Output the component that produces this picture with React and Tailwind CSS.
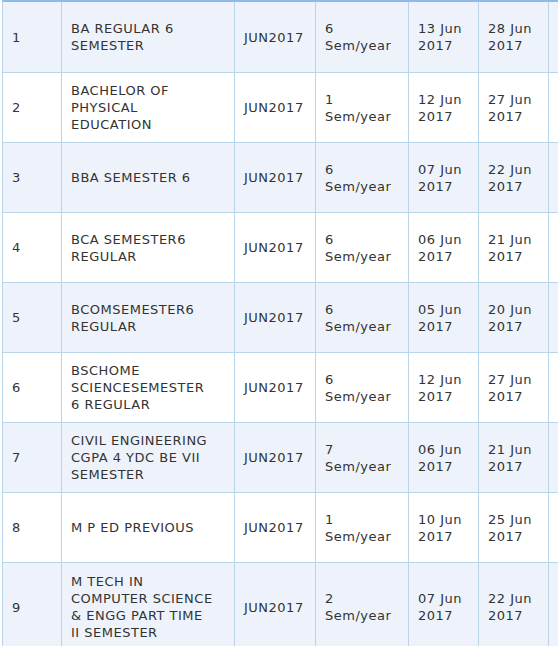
import React from "react";

const rows = [
  ["1", ["BA REGULAR 6", "SEMESTER"], "6", "13 Jun", "28 Jun"],
  ["2", ["BACHELOR OF", "PHYSICAL", "EDUCATION"], "1", "12 Jun", "27 Jun"],
  ["3", ["BBA SEMESTER 6"], "6", "07 Jun", "22 Jun"],
  ["4", ["BCA SEMESTER6", "REGULAR"], "6", "06 Jun", "21 Jun"],
  ["5", ["BCOMSEMESTER6", "REGULAR"], "6", "05 Jun", "20 Jun"],
  ["6", ["BSCHOME", "SCIENCESEMESTER", "6 REGULAR"], "6", "12 Jun", "27 Jun"],
  ["7", ["CIVIL ENGINEERING", "CGPA 4 YDC BE VII", "SEMESTER"], "7", "06 Jun", "21 Jun"],
  ["8", ["M P ED PREVIOUS"], "1", "10 Jun", "25 Jun"],
  ["9", ["M TECH IN", "COMPUTER SCIENCE", "& ENGG PART TIME", "II SEMESTER"], "2", "07 Jun", "22 Jun"],
];

function Cell({ w, children, last }) {
  return (
    <div
      className={`flex flex-col justify-center pl-[9px] ${last ? "flex-1" : "border-r border-[#b9d5ea]"} ${w}`}
    >
      {children}
    </div>
  );
}

export default function App() {
  return (
    <div
      className="w-[558px] h-[646px] overflow-hidden bg-white"
      style={{ fontFamily: '"DejaVu Sans", Verdana, sans-serif' }}
    >
      <div className="ml-[2px] border-l border-t-2 border-l-[#b9d5ea] border-t-[#8dbbe3] text-[13px] leading-[17px] tracking-[0.5px] text-[#333333]">
        {rows.map((r, i) => (
          <div
            key={r[0]}
            className={`flex border-b border-[#b9d5ea] ${i === 0 ? "h-[71px]" : i === 8 ? "h-[89px]" : "h-[70px]"} ${i % 2 === 0 ? "bg-[#eef3fb]" : "bg-white"}`}
          >
            <Cell w="w-[59px]">
              <span className="whitespace-nowrap">{r[0]}</span>
            </Cell>
            <Cell w="w-[173px]">
              {r[1].map((l) => (
                <span key={l} className="whitespace-nowrap">{l}</span>
              ))}
            </Cell>
            <Cell w="w-[81px]">
              <span className="whitespace-nowrap">JUN2017</span>
            </Cell>
            <Cell w="w-[93px]">
              <span>{r[2]}</span>
              <span className="whitespace-nowrap">Sem/year</span>
            </Cell>
            <Cell w="w-[70px]">
              <span className="whitespace-nowrap">{r[3]}</span>
              <span>2017</span>
            </Cell>
            <Cell w="w-[70px]">
              <span className="whitespace-nowrap">{r[4]}</span>
              <span>2017</span>
            </Cell>
            <Cell last>
              <span></span>
            </Cell>
          </div>
        ))}
      </div>
    </div>
  );
}
